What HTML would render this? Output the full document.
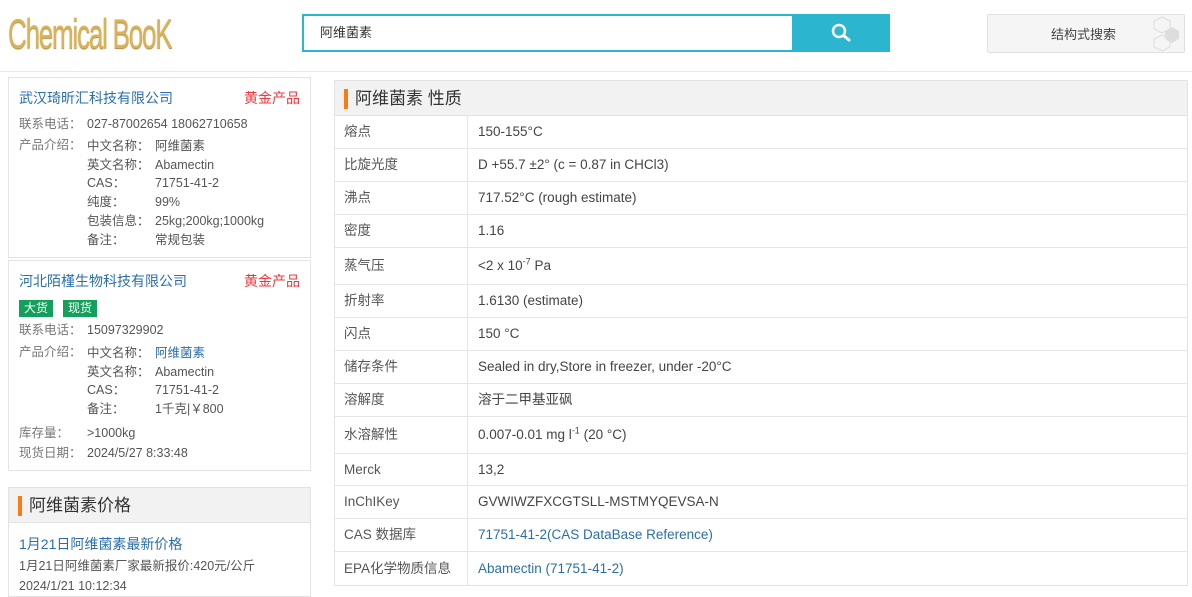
<!DOCTYPE html>
<html><head><meta charset="utf-8"><style>
*{margin:0;padding:0;box-sizing:border-box}
body{width:1192px;height:591px;overflow:hidden;background:#fff;font-family:"Liberation Sans","Noto Sans CJK SC",sans-serif;font-size:13px;color:#333;position:relative}
.abs{position:absolute}
.logo{left:8px;top:10px;font-size:42px;line-height:48px;color:#d9b25a;font-family:"Liberation Sans",sans-serif;letter-spacing:-2px;transform:scaleX(.62);transform-origin:left;text-shadow:0 1px 1px #b08a3a}
.search{left:302px;top:14px;width:492px;height:38px;border:2px solid #2bb5cf;padding-left:16px;line-height:34px;font-size:13px;color:#333}
.sbtn{left:793px;top:14px;width:97px;height:38px;background:#2bb5cf}
.struct{left:987px;top:14px;width:198px;height:39px;border:1px solid #e0e0e0;background:#f5f5f5;border-radius:2px;font-size:13px;color:#444;line-height:39px;padding-left:63px}
.hr{left:0;top:71px;width:1192px;height:1px;background:#e8e8e8}
.card{border:1px solid #e3e3e3;background:#fff}
.co{color:#2a6ead;font-size:14px;line-height:18px}
.gold{color:#f2333a;font-size:14px;line-height:18px;position:absolute;right:10px}
.r{position:absolute;font-size:12.5px;line-height:18.7px;color:#555;white-space:nowrap}
.g{color:#777}
.tag{position:absolute;background:#12a05a;color:#fff;font-size:12px;height:17px;line-height:17px;padding:0 5px}
.tbl{left:334px;top:80px;width:854px;height:506px;border:1px solid #e3e3e3}
.th{height:35px;background:#f2f2f2;border-bottom:1px solid #e3e3e3;font-size:17px;line-height:35px;padding-left:20px;position:relative;color:#333}
.bar{position:absolute;left:9px;top:8px;width:4px;height:20px;background:#f57e14}
.row{position:absolute;left:0;width:852px;border-bottom:1px solid #e6e6e6;font-size:13.5px}
.row span{line-height:18px;top:50%!important;margin-top:-9px}
.row .l{position:absolute;left:9px;color:#555}
.row .v{position:absolute;left:143px;color:#444}
sup{line-height:0}
.vl{position:absolute;left:132px;top:35px;width:1px;height:470px;background:#e6e6e6}
a{color:#2a6ead;text-decoration:none}
</style></head><body>
<div class="abs logo">Chemical BooK</div>
<div class="abs search">阿维菌素</div>
<div class="abs sbtn"><svg width="97" height="38"><circle cx="46" cy="17" r="6" fill="none" stroke="#fff" stroke-width="2.5"/><line x1="50.5" y1="21.5" x2="56" y2="26" stroke="#fff" stroke-width="3" stroke-linecap="round"/></svg></div>
<div class="abs struct">结构式搜索
<svg class="abs" style="right:2px;top:0" width="40" height="39"><g fill="none" stroke="#ddd" stroke-width="1"><polygon points="20,2 28,6 28,14 20,18 12,14 12,6"/><polygon points="20,20 28,24 28,32 20,36 12,32 12,24"/></g><polygon points="30,12 37,16 37,24 30,28 23,24 23,16" fill="#ddd"/></svg></div>
<div class="abs hr"></div>

<div class="abs card" style="left:8px;top:77px;width:303px;height:181px">
<div class="abs co" style="left:10px;top:11px">武汉琦昕汇科技有限公司</div><div class="gold" style="top:11px">黄金产品</div>
<div class="r g" style="left:10px;top:37px">联系电话：</div><div class="r" style="left:78px;top:37px">027-87002654 18062710658</div>
<div class="r g" style="left:10px;top:58px">产品介绍：</div>
<div class="r" style="left:78px;top:59px">中文名称：<br>英文名称：<br>CAS：<br>纯度：<br>包装信息：<br>备注：</div>
<div class="r" style="left:146px;top:59px">阿维菌素<br>Abamectin<br>71751-41-2<br>99%<br>25kg;200kg;1000kg<br>常规包装</div>
</div>

<div class="abs card" style="left:8px;top:260px;width:303px;height:211px">
<div class="abs co" style="left:10px;top:11px">河北陌槿生物科技有限公司</div><div class="gold" style="top:11px">黄金产品</div>
<div class="tag" style="left:10px;top:39px">大货</div><div class="tag" style="left:54px;top:39px">现货</div>
<div class="r g" style="left:10px;top:60px">联系电话：</div><div class="r" style="left:78px;top:60px">15097329902</div>
<div class="r g" style="left:10px;top:82px">产品介绍：</div>
<div class="r" style="left:78px;top:83px">中文名称：<br>英文名称：<br>CAS：<br>备注：</div>
<div class="r" style="left:146px;top:83px"><a>阿维菌素</a><br>Abamectin<br>71751-41-2<br>1千克|￥800</div>
<div class="r g" style="left:10px;top:163px">库存量：</div><div class="r" style="left:78px;top:163px">&gt;1000kg</div>
<div class="r g" style="left:10px;top:183px">现货日期：</div><div class="r" style="left:78px;top:183px">2024/5/27 8:33:48</div>
</div>

<div class="abs card" style="left:8px;top:487px;width:303px;height:110px">
<div class="th"><div class="bar"></div>阿维菌素价格</div>
<div class="abs co" style="left:10px;top:47px">1月21日阿维菌素最新价格</div>
<div class="r" style="left:10px;top:69px">1月21日阿维菌素厂家最新报价:420元/公斤</div>
<div class="r" style="left:10px;top:89px">2024/1/21 10:12:34</div>
</div>

<div class="abs tbl">
<div class="th"><div class="bar"></div>阿维菌素 性质</div>
<div class="vl"></div>
<div class="row" style="top:35px;height:33px"><span class="l">熔点</span><span class="v">150-155°C</span></div>
<div class="row" style="top:68px;height:33px"><span class="l">比旋光度</span><span class="v">D +55.7 ±2° (c = 0.87 in CHCl3)</span></div>
<div class="row" style="top:101px;height:33px"><span class="l">沸点</span><span class="v">717.52°C (rough estimate)</span></div>
<div class="row" style="top:134px;height:33px"><span class="l">密度</span><span class="v">1.16</span></div>
<div class="row" style="top:167px;height:37px"><span class="l">蒸气压</span><span class="v">&lt;2 x 10<sup style="font-size:9px">-7</sup> Pa</span></div>
<div class="row" style="top:204px;height:33px"><span class="l">折射率</span><span class="v">1.6130 (estimate)</span></div>
<div class="row" style="top:237px;height:33px"><span class="l">闪点</span><span class="v">150 °C</span></div>
<div class="row" style="top:270px;height:33px"><span class="l">储存条件</span><span class="v">Sealed in dry,Store in freezer, under -20°C</span></div>
<div class="row" style="top:303px;height:33px"><span class="l">溶解度</span><span class="v">溶于二甲基亚砜</span></div>
<div class="row" style="top:336px;height:37px"><span class="l">水溶解性</span><span class="v">0.007-0.01 mg l<sup style="font-size:9px">-1</sup> (20 °C)</span></div>
<div class="row" style="top:373px;height:32px"><span class="l">Merck</span><span class="v">13,2</span></div>
<div class="row" style="top:405px;height:33px"><span class="l">InChIKey</span><span class="v">GVWIWZFXCGTSLL-MSTMYQEVSA-N</span></div>
<div class="row" style="top:438px;height:33px"><span class="l">CAS 数据库</span><span class="v"><a>71751-41-2(CAS DataBase Reference)</a></span></div>
<div class="row" style="top:471px;height:34px;border-bottom:none"><span class="l">EPA化学物质信息</span><span class="v"><a>Abamectin (71751-41-2)</a></span></div>
</div>
</body></html>
